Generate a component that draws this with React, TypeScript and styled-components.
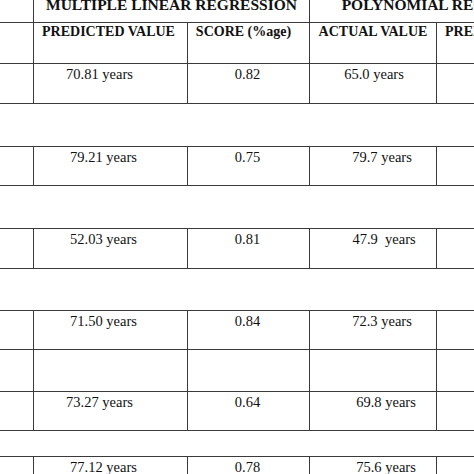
import type { FC } from 'react'
import { Fragment } from 'react'
import styled, { createGlobalStyle } from 'styled-components'

const GlobalStyle = createGlobalStyle`
  *, *::before, *::after {
    box-sizing: border-box;
  }
  html, body {
    margin: 0;
    padding: 0;
    background: #ffffff;
    overflow: hidden;
  }
  body {
    font-family: 'Liberation Serif', 'Times New Roman', serif;
    color: #111111;
  }
`

interface ResultRow {
  predicted: string
  predictedOffset: number
  score: string
  actual: string
  actualOffset: number
  height: number
}

const rows: ResultRow[] = [
  { predicted: '70.81 years', predictedOffset: -11, score: '0.82', actual: '65.0 years', actualOffset: 1, height: 40 },
  { predicted: '79.21 years', predictedOffset: -7, score: '0.75', actual: '79.7 years', actualOffset: 9, height: 39 },
  { predicted: '52.03 years', predictedOffset: -7, score: '0.81', actual: '47.9  years', actualOffset: 11, height: 40 },
  { predicted: '71.50 years', predictedOffset: -7, score: '0.84', actual: '72.3 years', actualOffset: 9, height: 39 },
  { predicted: '73.27 years', predictedOffset: -11, score: '0.64', actual: '69.8 years', actualOffset: 13, height: 39 },
  { predicted: '77.12 years', predictedOffset: -7, score: '0.78', actual: '75.6 years', actualOffset: 13, height: 40 }
]

// height of the blank band after each data row (0 = none)
const gapAfter = [43, 43, 42, 0, 26]

const COLUMNS = '34px 154px 122px 127px 150px 150px'

const Page = styled.div`
  width: 474px;
  height: 474px;
  overflow: hidden;
`

const Table = styled.div`
  display: flex;
  flex-direction: column;
  width: 737px;
`

const Row = styled.div<{ $height: number }>`
  display: grid;
  grid-template-columns: ${COLUMNS};
  height: ${(p) => p.$height}px;
  border-bottom: 1px solid #3a3a3a;
`

const Gap = styled.div<{ $height: number }>`
  height: ${(p) => p.$height}px;
  border-bottom: 1px solid #3a3a3a;
`

const Cell = styled.div<{ $span?: number; $open?: boolean; $offset?: number }>`
  grid-column: span ${(p) => p.$span ?? 1};
  border-right: ${(p) => (p.$open ? 'none' : '1px solid #3a3a3a')};
  text-align: center;
  white-space: pre;
  font-size: 14.5px;
  line-height: 16px;
  padding-top: 2px;
  padding-left: ${(p) => Math.max(0, (p.$offset ?? 0) * 2)}px;
  padding-right: ${(p) => Math.max(0, -(p.$offset ?? 0) * 2)}px;
`

const GroupTitle = styled(Cell)`
  font-weight: bold;
  font-size: 15.5px;
  line-height: 10px;
  padding-top: 0;
`

const HeadCell = styled(Cell)`
  font-weight: bold;
  font-size: 14px;
  padding-top: 1px;
`

const App: FC = () => {
  return (
    <Page>
      <GlobalStyle />
      <Table>
        <Row $height={23}>
          <Cell />
          <GroupTitle $span={2}>MULTIPLE LINEAR REGRESSION</GroupTitle>
          <GroupTitle $span={2} $open $offset={-1}>
            POLYNOMIAL REGRESSION
          </GroupTitle>
          <Cell $open />
        </Row>
        <Row $height={41}>
          <Cell />
          <HeadCell $offset={-2}>PREDICTED VALUE</HeadCell>
          <HeadCell $offset={-5}>SCORE (%age)</HeadCell>
          <HeadCell>ACTUAL VALUE</HeadCell>
          <HeadCell>PREDICTED VALUE</HeadCell>
          <HeadCell $open>SCORE (%age)</HeadCell>
        </Row>
        {rows.map((row, i) => (
          <Fragment key={row.predicted}>
            <Row $height={row.height}>
              <Cell />
              <Cell $offset={row.predictedOffset}>{row.predicted}</Cell>
              <Cell $offset={-1}>{row.score}</Cell>
              <Cell $offset={row.actualOffset}>{row.actual}</Cell>
              <Cell />
              <Cell $open />
            </Row>
            {i === 3 && (
              <Row $height={42}>
                <Cell />
                <Cell />
                <Cell />
                <Cell />
                <Cell />
                <Cell $open />
              </Row>
            )}
            {i < gapAfter.length && gapAfter[i] > 0 && <Gap $height={gapAfter[i]} />}
          </Fragment>
        ))}
      </Table>
    </Page>
  )
}

export default App
